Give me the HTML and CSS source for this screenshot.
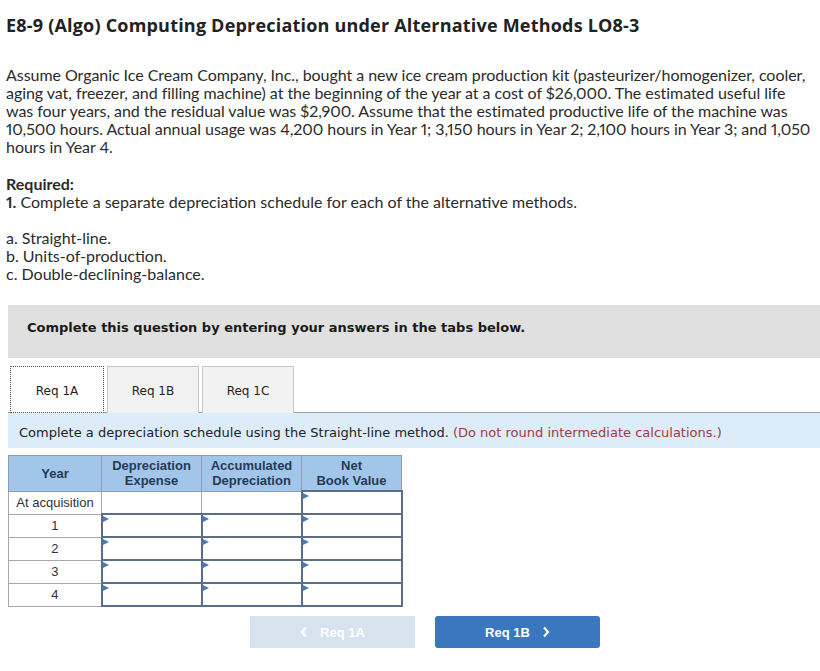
FILE: index.html
```html
<!DOCTYPE html>
<html>
<head>
<meta charset="utf-8">
<link rel="stylesheet" href="styles.css">
</head>
<body>
<div class="page">
  <h1 class="title">E8-9 (Algo) Computing Depreciation under Alternative Methods LO8-3</h1>
  <p class="intro">Assume Organic Ice Cream Company, Inc., bought a new ice cream production kit (pasteurizer/homogenizer, cooler,<br>aging vat, freezer, and filling machine) at the beginning of the year at a cost of $26,000. The estimated useful life<br>was four years, and the residual value was $2,900. Assume that the estimated productive life of the machine was<br>10,500 hours. Actual annual usage was 4,200 hours in Year 1; 3,150 hours in Year 2; 2,100 hours in Year 3; and 1,050<br>hours in Year 4.</p>
  <div class="required">
    <div class="req-label">Required:</div>
    <div><b>1.</b> Complete a separate depreciation schedule for each of the alternative methods.</div>
  </div>
  <ul class="methods">
    <li>a. Straight-line.</li>
    <li>b. Units-of-production.</li>
    <li>c. Double-declining-balance.</li>
  </ul>
</div>

<div class="question">
  <div class="banner">Complete this question by entering your answers in the tabs below.</div>
  <div class="tabs">
    <div class="tab active">Req 1A</div>
    <div class="tab">Req 1B</div>
    <div class="tab">Req 1C</div>
  </div>
  <div class="instructions">Complete a depreciation schedule using the Straight-line method. <span class="note">(Do not round intermediate calculations.)</span></div>

  <table class="schedule">
    <colgroup>
      <col class="c-year"><col class="c-num"><col class="c-num"><col class="c-num">
    </colgroup>
    <thead>
      <tr><th>Year</th><th>Depreciation<br>Expense</th><th>Accumulated<br>Depreciation</th><th>Net<br>Book Value</th></tr>
    </thead>
    <tbody>
      <tr><td class="yr">At acquisition</td><td></td><td></td><td class="in"><div class="box"></div></td></tr>
      <tr><td class="yr">1</td><td class="in"><div class="box"></div></td><td class="in"><div class="box"></div></td><td class="in"><div class="box"></div></td></tr>
      <tr><td class="yr">2</td><td class="in"><div class="box"></div></td><td class="in"><div class="box"></div></td><td class="in"><div class="box"></div></td></tr>
      <tr><td class="yr">3</td><td class="in"><div class="box"></div></td><td class="in"><div class="box"></div></td><td class="in"><div class="box"></div></td></tr>
      <tr><td class="yr">4</td><td class="in"><div class="box"></div></td><td class="in"><div class="box"></div></td><td class="in"><div class="box"></div></td></tr>
    </tbody>
  </table>

  <div class="nav">
    <div class="btn prev">
      <svg width="8" height="12" viewBox="0 0 8 12"><path d="M6 1.5 L2 6 L6 10.5" fill="none" stroke="#fff" stroke-width="2.2"/></svg>
      <span>Req 1A</span>
    </div>
    <div class="btn next">
      <span>Req 1B</span>
      <svg width="8" height="12" viewBox="0 0 8 12"><path d="M2 1.5 L6 6 L2 10.5" fill="none" stroke="#fff" stroke-width="2.2"/></svg>
    </div>
  </div>
</div>
</body>
</html>
```

FILE: styles.css
```css
html, body { margin: 0; padding: 0; background: #fff; }
body { width: 820px; overflow: hidden; }

.page {
  padding: 0 0 0 6px;
  font-family: Lato, "Noto Sans", sans-serif;
  color: #2b2b2b;
}

.title {
  margin: 0;
  padding-top: 15px;
  font-family: "Open Sans", "Noto Sans", sans-serif;
  font-size: 18px;
  letter-spacing: 0.2px;
  line-height: 20px;
  font-weight: 700;
  color: #222;
}

.intro {
  margin: 31px 0 0;
  font-size: 16px;
  line-height: 18px;
  letter-spacing: -0.05px;
  font-variant-numeric: proportional-nums;
  white-space: nowrap;
}

.required {
  margin-top: 19px;
  font-size: 16px;
  line-height: 18px;
  font-variant-numeric: proportional-nums;
}
.req-label { font-weight: 700; }
.required b { font-weight: 700; }

.methods {
  list-style: none;
  margin: 18px 0 0;
  padding: 0;
  font-size: 16px;
  line-height: 18px;
}

.question {
  margin-top: 22px;
  padding-left: 8px;
  font-family: "DejaVu Sans", Verdana, sans-serif;
  color: #222;
}

.banner {
  height: 53px;
  box-sizing: border-box;
  background: #e0e0e0;
  padding: 15px 0 0 19px;
  font-size: 13px;
  line-height: 16px;
  font-weight: 700;
  color: #1a1a1a;
}

.tabs {
  display: flex;
  gap: 3px;
  margin-top: 8px;
  padding-left: 2px;
  position: relative;
  z-index: 1;
}
.tab {
  width: 92px;
  height: 47px;
  box-sizing: border-box;
  border: 1px solid #c8c8c8;
  border-bottom: none;
  background: #f2f2f2;
  padding-top: 2px;
  font-size: 12px;
  line-height: 45px;
  text-align: center;
  color: #222;
}
.tab.active {
  width: 94px;
  background: #fff;
  border: 1px dotted #555;
  border-bottom: 1px dotted #555;
}

.instructions {
  height: 36px;
  box-sizing: border-box;
  border-top: 1px solid #a0a0a0;
  margin-top: -1px;
  background: #dcecf9;
  padding: 12px 0 0 11px;
  font-size: 13px;
  line-height: 16px;
  color: #222;
}
.note { color: #a33a3a; }

.schedule {
  margin-top: 7px;
  border-collapse: collapse;
  table-layout: fixed;
  width: 393px;
  font-family: "Liberation Sans", Arial, sans-serif;
  font-size: 13px;
}
.c-year { width: 93px; }
.c-num { width: 100px; }

.schedule th {
  height: 34px;
  padding: 0;
  background: #a2c5ea;
  border: 1px solid #8d9db3;
  color: #253a56;
  font-weight: 700;
  line-height: 15px;
  text-align: center;
}
.schedule td {
  height: 23px;
  padding: 0;
  border: 1px solid #a8a8a8;
  text-align: center;
  color: #333;
  box-sizing: border-box;
}
.schedule td.in {
  border: 2px solid #5a6d89;
}
.box {
  position: relative;
  height: 19px;
}
.box::before {
  content: "";
  position: absolute;
  left: 0;
  top: 0;
  border-left: 6px solid #4a7ab7;
  border-top: 3.5px solid transparent;
  border-bottom: 3.5px solid transparent;
}

.nav {
  display: flex;
  gap: 20px;
  margin-top: 9px;
  padding-left: 242px;
  font-family: "Liberation Sans", Arial, sans-serif;
}
.btn {
  width: 165px;
  height: 32px;
  border-radius: 3px;
  display: flex;
  align-items: center;
  justify-content: center;
  gap: 12px;
  font-size: 13px;
  font-weight: 700;
  color: #fff;
}
.btn.prev { background: #d8e3f0; border-radius: 0; }
.btn.next { background: #3a77be; }
```
